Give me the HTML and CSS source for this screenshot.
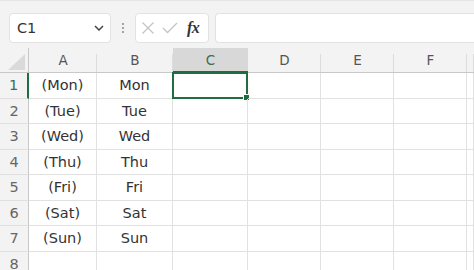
FILE: index.html
```html
<!DOCTYPE html>
<html>
<head>
<meta charset="utf-8">
<link rel="stylesheet" href="styles.css">
</head>
<body>
<div class="app">
  <div class="toolbar">
    <div class="namebox">
      <span class="name">C1</span>
      <svg class="chev" width="10" height="6" viewBox="0 0 10 6"><path d="M1 1 L5 5 L9 1" fill="none" stroke="#444" stroke-width="1.5"/></svg>
    </div>
    <div class="dots"><span></span><span></span><span></span></div>
    <div class="fxbox">
      <svg width="12" height="12" viewBox="0 0 12 12"><path d="M0.5 0.5 L11.5 11.5 M11.5 0.5 L0.5 11.5" stroke="#c4c4c4" stroke-width="1.3" fill="none"/></svg>
      <svg width="16" height="12" viewBox="0 0 16 12"><path d="M1 6 L5.5 10.5 L15 1" stroke="#c4c4c4" stroke-width="1.3" fill="none"/></svg>
      <span class="fx">fx</span>
    </div>
    <div class="input"></div>
  </div>
  <div class="grid">
    <div class="corner"><span class="tri"></span></div>
    <div class="ch">A</div>
    <div class="ch">B</div>
    <div class="ch sel">C</div>
    <div class="ch">D</div>
    <div class="ch">E</div>
    <div class="ch">F</div>
    <div class="ch last"></div>

    <div class="rh sel">1</div><div class="c">(Mon)</div><div class="c">Mon</div><div class="c active"><span class="handle"></span></div><div class="c"></div><div class="c"></div><div class="c"></div><div class="c"></div>
    <div class="rh">2</div><div class="c">(Tue)</div><div class="c">Tue</div><div class="c"></div><div class="c"></div><div class="c"></div><div class="c"></div><div class="c"></div>
    <div class="rh">3</div><div class="c">(Wed)</div><div class="c">Wed</div><div class="c"></div><div class="c"></div><div class="c"></div><div class="c"></div><div class="c"></div>
    <div class="rh">4</div><div class="c">(Thu)</div><div class="c">Thu</div><div class="c"></div><div class="c"></div><div class="c"></div><div class="c"></div><div class="c"></div>
    <div class="rh">5</div><div class="c">(Fri)</div><div class="c">Fri</div><div class="c"></div><div class="c"></div><div class="c"></div><div class="c"></div><div class="c"></div>
    <div class="rh">6</div><div class="c">(Sat)</div><div class="c">Sat</div><div class="c"></div><div class="c"></div><div class="c"></div><div class="c"></div><div class="c"></div>
    <div class="rh">7</div><div class="c">(Sun)</div><div class="c">Sun</div><div class="c"></div><div class="c"></div><div class="c"></div><div class="c"></div><div class="c"></div>
    <div class="rh">8</div><div class="c"></div><div class="c"></div><div class="c"></div><div class="c"></div><div class="c"></div><div class="c"></div><div class="c"></div>
  </div>
</div>
</body>
</html>
```
FILE: styles.css
```css
html, body {
  margin: 0;
  padding: 0;
}
body {
  width: 474px;
  height: 270px;
  overflow: hidden;
  background: #f3f3f3;
  font-family: "DejaVu Sans", "Noto Sans CJK JP", sans-serif;
  color: #333;
}
.app {
  display: flex;
  flex-direction: column;
  width: 474px;
}
.toolbar {
  display: flex;
  align-items: center;
  height: 48px;
  padding: 12px 0 6px 9px;
  box-sizing: border-box;
  background: #f3f3f3;
  border-top: 1px solid #e6e6e6;
}
.namebox {
  width: 102px;
  height: 30px;
  box-sizing: border-box;
  background: #fff;
  border: 1px solid #e2e2e2;
  border-radius: 4px;
  display: flex;
  align-items: center;
  justify-content: space-between;
  padding: 0 6px 0 7px;
}
.name {
  font-size: 14.5px;
  color: #333;
}
.chev { margin-top: 1px; }
.dots {
  width: 24px;
  display: flex;
  flex-direction: column;
  align-items: center;
  gap: 2px;
}
.dots span {
  width: 2px;
  height: 2px;
  background: #888;
  border-radius: 1px;
}
.fxbox {
  width: 74px;
  height: 30px;
  box-sizing: border-box;
  background: #fff;
  border: 1px solid #e2e2e2;
  border-radius: 4px;
  display: flex;
  align-items: center;
  padding: 0 0 0 6px;
  gap: 8px;
}
.fx {
  font-family: "Liberation Serif", serif;
  font-style: italic;
  font-weight: bold;
  font-size: 16px;
  color: #333;
  margin-left: 1px;
  letter-spacing: -0.5px;
}
.input {
  flex: 1;
  height: 30px;
  margin-left: 6px;
  box-sizing: border-box;
  background: #fff;
  border: 1px solid #e2e2e2;
  border-right: none;
  border-radius: 4px 0 0 4px;
}
.grid {
  display: grid;
  grid-template-columns: 29px 68px 76px 75px 73px 73px 73px 1fr;
  grid-template-rows: 25px repeat(8, 25.5px);
  background: #fff;
}
.corner {
  background: #f3f3f3;
  border-bottom: 1px solid #c8c8c8;
  border-right: 1px solid #c8c8c8;
  position: relative;
}
.tri {
  position: absolute;
  right: 3px;
  bottom: 2px;
  width: 0;
  height: 0;
  border-left: 17px solid transparent;
  border-bottom: 16px solid #dadada;
}
.ch {
  background: #f3f3f3;
  border-bottom: 1px solid #c8c8c8;
  position: relative;
  display: flex;
  align-items: center;
  justify-content: center;
  font-size: 13.5px;
  color: #555;
}
.ch::after {
  content: "";
  position: absolute;
  right: 0;
  top: 6px;
  bottom: 0;
  width: 1px;
  background: #dcdcdc;
}
.ch.sel {
  background: #d8d8d8;
  color: #3f6b54;
  border-bottom: 2px solid #1e6e42;
}
.ch.sel::after { display: none; }
.rh {
  background: #f3f3f3;
  border-right: 1px solid #c8c8c8;
  border-bottom: 1px solid #e0e0e0;
  display: flex;
  align-items: center;
  justify-content: center;
  font-size: 14.5px;
  color: #666;
}
.rh.sel {
  border-right: 2px solid #1e6e42;
  color: #3f6b54;
}
.c {
  border-right: 1px solid #e1e1e1;
  border-bottom: 1px solid #e1e1e1;
  display: flex;
  align-items: center;
  justify-content: center;
  font-size: 14.5px;
  color: #333;
  position: relative;
}
.c.active {
  border: 2px solid #1e6e42;
  margin: -1px 0 0 -1px;
}
.handle {
  position: absolute;
  right: -4px;
  bottom: -4px;
  width: 5px;
  height: 5px;
  background: #1e6e42;
  border: 1px solid #fff;
}
```
